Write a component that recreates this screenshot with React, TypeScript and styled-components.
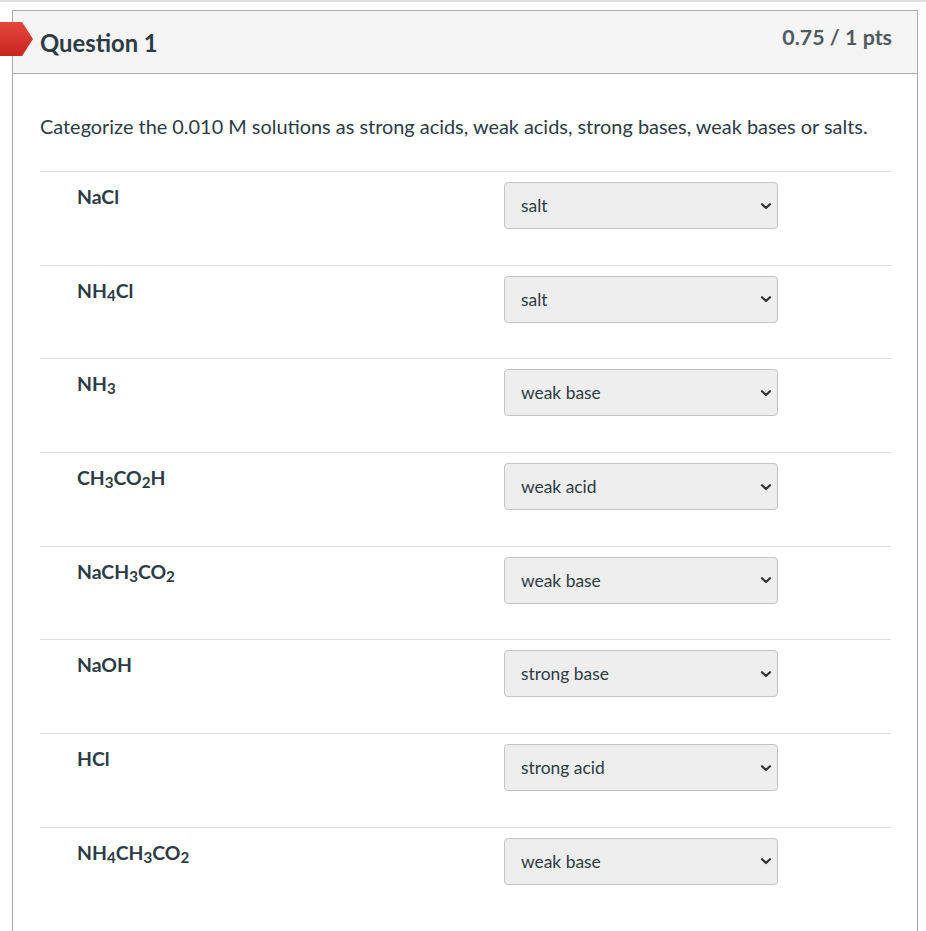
import * as React from 'react'
import styled, {createGlobalStyle} from 'styled-components'

const GlobalStyle = createGlobalStyle`
  html, body {
    margin: 0;
    padding: 0;
    background: #fff;
  }
  body {
    font-family: Lato, "Open Sans", sans-serif;
    color: #2d3b45;
  }
  *, *:before, *:after {
    box-sizing: border-box;
  }
`

const Page = styled.div`
  border-top: 2px solid #e0e0e0;
  padding: 8px 8px 0 12px;
  overflow: hidden;
  height: 931px;
`

const Card = styled.section`
  position: relative;
  width: 906px;
  border: 1px solid #aaaaaa;
  border-bottom: none;
  min-height: 1000px;
`

const Header = styled.header`
  height: 63px;
  background: #f5f5f5;
  border-bottom: 1px solid #aaaaaa;
  display: flex;
  justify-content: space-between;
  padding: 0 25px 0 27px;
`

const Title = styled.h2`
  margin: 0;
  padding-top: 17px;
  font-size: 23.8px;
  font-weight: 700;
  color: #2d3b45;
  line-height: 30px;
`

const Points = styled.div`
  padding-top: 12px;
  font-size: 21.4px;
  font-weight: 700;
  color: #505a61;
  line-height: 28px;
`

const Flag = styled.div`
  position: absolute;
  left: -13px;
  top: 11px;
  width: 33px;
  height: 34px;
  background: linear-gradient(#e5473f, #c7261f);
  clip-path: polygon(0 0, 67% 0, 100% 50%, 67% 100%, 0 100%);
`

const Body = styled.div`
  padding: 40px 26px 0 27px;
`

const Prompt = styled.p`
  margin: 0 0 33px;
  font-size: 19.9px;
  line-height: 24px;
  color: #2d3b45;
`

const Row = styled.div`
  display: grid;
  grid-template-columns: 427px 274px;
  height: 93.7px;
  border-top: 1px solid #dddddd;
  padding-left: 37px;
`

const Label = styled.div`
  padding-top: 13px;
  font-size: 19.4px;
  font-weight: 700;
  line-height: 24px;
  color: #2d3b45;

  sub {
    font-size: 0.78em;
    line-height: 0;
    vertical-align: -0.22em;
  }
`

const Select = styled.div`
  margin-top: 10px;
  height: 47px;
  display: flex;
  align-items: center;
  justify-content: space-between;
  padding: 0 5px 0 16px;
  background: #eeeeee;
  border: 1px solid #c4c4c4;
  border-radius: 4px;
  font-size: 17.4px;
  color: #2d3b45;
`

const Chevron = () => (
  <svg width="12" height="12" viewBox="0 0 12 12" aria-hidden>
    <path d="M2 4.2 L6 8 L10 4.2" fill="none" stroke="#333" strokeWidth="2.2" strokeLinecap="round" strokeLinejoin="round" />
  </svg>
)

const rows: {label: React.ReactNode; answer: string}[] = [
  {label: 'NaCl', answer: 'salt'},
  {label: <>NH<sub>4</sub>Cl</>, answer: 'salt'},
  {label: <>NH<sub>3</sub></>, answer: 'weak base'},
  {label: <>CH<sub>3</sub>CO<sub>2</sub>H</>, answer: 'weak acid'},
  {label: <>NaCH<sub>3</sub>CO<sub>2</sub></>, answer: 'weak base'},
  {label: 'NaOH', answer: 'strong base'},
  {label: 'HCl', answer: 'strong acid'},
  {label: <>NH<sub>4</sub>CH<sub>3</sub>CO<sub>2</sub></>, answer: 'weak base'},
]

export default function App() {
  return (
    <>
      <GlobalStyle />
      <Page>
        <Card>
          <Flag />
          <Header>
            <Title>Question 1</Title>
            <Points>0.75 / 1 pts</Points>
          </Header>
          <Body>
            <Prompt>
              Categorize the 0.010 M solutions as strong acids, weak acids, strong bases, weak bases or salts.
            </Prompt>
            {rows.map((r, i) => (
              <Row key={i}>
                <Label>{r.label}</Label>
                <Select>
                  <span>{r.answer}</span>
                  <Chevron />
                </Select>
              </Row>
            ))}
          </Body>
        </Card>
      </Page>
    </>
  )
}
